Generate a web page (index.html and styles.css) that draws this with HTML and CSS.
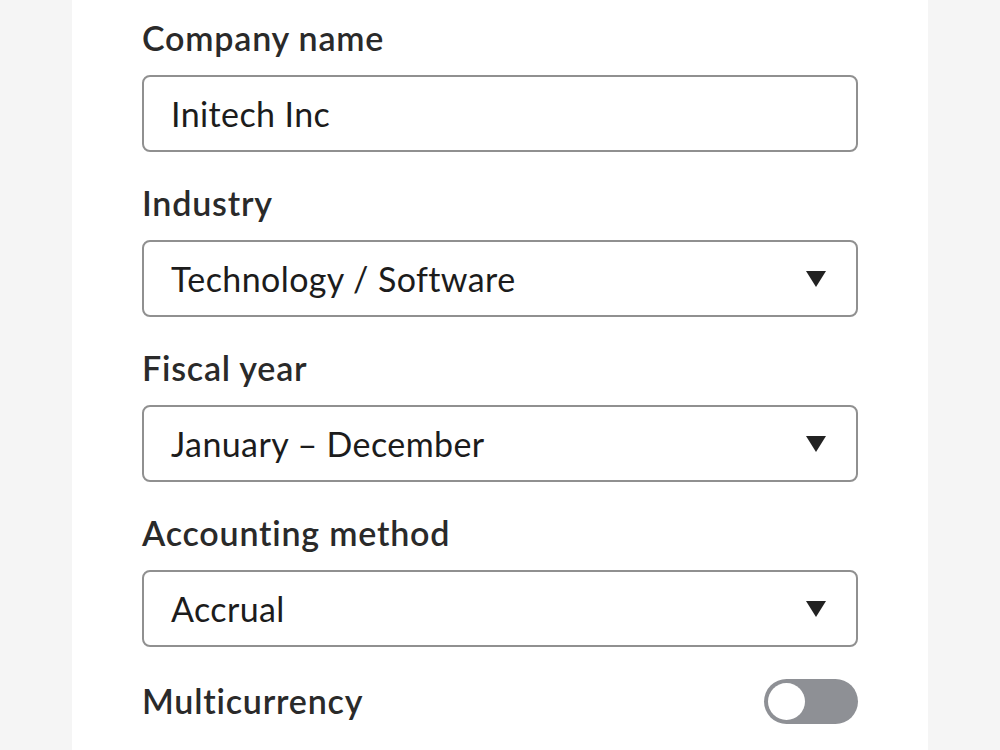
FILE: index.html
```html
<!DOCTYPE html>
<html lang="en">
<head>
    <meta charset="UTF-8">
    <meta name="viewport" content="width=device-width, initial-scale=1.0">
    <title>Company settings</title>
    <link rel="stylesheet" href="styles.css">
</head>
<body>

    <div class="panel">
        <div class="field">
            <label class="label">Company name</label>
            <div class="box">Initech Inc</div>
        </div>

        <div class="field">
            <label class="label">Industry</label>
            <div class="box">
                <span>Technology / Software</span>
                <span class="arrow"></span>
            </div>
        </div>

        <div class="field">
            <label class="label">Fiscal year</label>
            <div class="box">
                <span>January – December</span>
                <span class="arrow"></span>
            </div>
        </div>

        <div class="field">
            <label class="label">Accounting method</label>
            <div class="box">
                <span>Accrual</span>
                <span class="arrow"></span>
            </div>
        </div>

        <div class="toggle-row">
            <span class="label">Multicurrency</span>
            <span class="toggle"><span class="knob"></span></span>
        </div>
    </div>

</body>
</html>
```

FILE: styles.css
```css
body {
    margin: 0;
    background-color: #f5f5f5;
    font-family: Lato, "Noto Sans", sans-serif;
}
.panel {
    margin: 0 72px;
    padding: 18px 70px 0;
    min-height: 732px;
    background-color: #fff;
    display: flex;
    flex-direction: column;
    gap: 31px;
}
.field {
    display: flex;
    flex-direction: column;
    gap: 17px;
}
.label {
    font-size: 34px;
    font-weight: 600;
    line-height: 40px;
    letter-spacing: 0.8px;
    color: #2a2a2a;
}
.box {
    height: 77px;
    box-sizing: border-box;
    border: 2px solid #909090;
    border-radius: 8px;
    padding: 0 27px;
    display: flex;
    align-items: center;
    justify-content: space-between;
    font-size: 34px;
    letter-spacing: 0.4px;
    color: #1c1c1c;
}
.arrow {
    width: 0;
    height: 0;
    border-left: 10px solid transparent;
    border-right: 10px solid transparent;
    border-top: 16px solid #222;
    margin-right: 3px;
}
.toggle-row {
    display: flex;
    align-items: center;
    justify-content: space-between;
    height: 46px;
}
.toggle {
    width: 94px;
    height: 45px;
    border-radius: 23px;
    background-color: #8e9095;
    display: flex;
    align-items: center;
    padding: 0 4px;
    box-sizing: border-box;
}
.knob {
    width: 37px;
    height: 37px;
    border-radius: 50%;
    background-color: #fff;
}
```
